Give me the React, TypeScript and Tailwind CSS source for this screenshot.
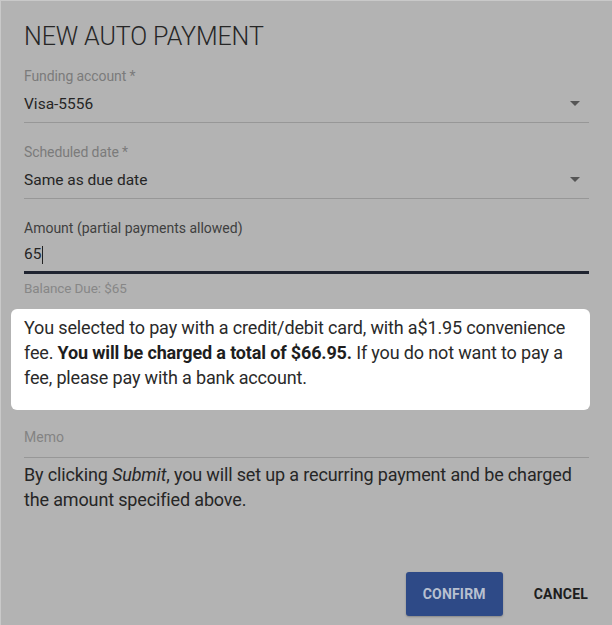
import React from "react";

const font = { fontFamily: "Roboto, 'Liberation Sans', sans-serif" };

function Caret() {
  return (
    <svg width="10" height="6" viewBox="0 0 10 6" className="shrink-0">
      <path d="M0 0 L10 0 L5 5 Z" fill="#555555" />
    </svg>
  );
}

function SelectField({ label, value }: { label: string; value: string }) {
  return (
    <div className="flex flex-col">
      <div className="h-[20px] leading-[20px] text-[14px] text-[#7b7b7b] tracking-[-0.1px]">{label}</div>
      <div className="h-[37px] flex items-center justify-between border-b border-[#979797] pr-[9px]">
        <span className="text-[15.5px] text-[#252525] mt-[1px]">{value}</span>
        <Caret />
      </div>
    </div>
  );
}

export default function App() {
  return (
    <div
      className="w-[612px] h-[625px] bg-[#b3b3b3] border-t border-l border-[#c9c9c9] px-[23px] pt-[20px] flex flex-col"
      style={font}
    >
      <h1 className="text-[25px] leading-[32px] font-light text-[#262626] tracking-[-0.1px]">NEW AUTO PAYMENT</h1>
      <div className="mt-[13px]">
        <SelectField label="Funding account *" value="Visa-5556" />
      </div>
      <div className="mt-[19px]">
        <SelectField label="Scheduled date *" value="Same as due date" />
      </div>
      <div className="mt-[19px] flex flex-col">
        <div className="h-[20px] leading-[20px] text-[14px] text-[#3f3f3f]">Amount (partial payments allowed)</div>
        <div className="h-[36px] flex items-center border-b-[3px] border-[#1f2430]">
          <span className="text-[15.5px] text-[#252525] mt-[1px]">65</span>
          <span className="w-[1px] h-[18px] bg-[#222] ml-[1px] mt-[1px]" />
        </div>
        <div className="mt-[6px] h-[16px] leading-[16px] text-[13.5px] text-[#878787] tracking-[-0.1px]">Balance Due: $65</div>
      </div>
      <div className="mt-[13px] -ml-[13px] -mr-[1px] bg-white rounded-[6px] pl-[13px] pr-[1px] pt-[6px] pb-[21px] h-[101px]">
        <p className="text-[18px] leading-[25px] text-[#2a2a2a] tracking-[-0.15px] whitespace-nowrap">
          You selected to pay with a credit/debit card, with a$1.95 convenience
          <br />
          fee. <strong className="font-bold text-[#1e1e1e]">You will be charged a total of $66.95.</strong> If you do
          not want to pay a
          <br />
          fee, please pay with a bank account.
        </p>
      </div>
      <div className="mt-[17px] h-[31px] border-b border-[#979797]">
        <div className="h-[20px] leading-[20px] text-[14px] text-[#838383]">Memo</div>
      </div>
      <p className="mt-[5px] text-[18px] leading-[24.5px] text-[#262626] tracking-[-0.15px] whitespace-nowrap">
        By clicking <em className="italic">Submit</em>, you will set up a recurring payment and be charged
        <br />
        the amount specified above.
      </p>
      <div className="mt-auto mb-[9px] flex justify-end items-center gap-[31px] pr-[1px]">
        <button className="w-[97px] h-[44px] rounded-[3px] bg-[#2e4a87] text-[#b8c0d0] text-[14px] font-bold tracking-[0.2px] shadow-[0_1px_2px_rgba(0,0,0,0.25)]">
          CONFIRM
        </button>
        <button className="text-[14px] font-bold text-[#1e1e1e] tracking-[0.2px] h-[44px]">CANCEL</button>
      </div>
    </div>
  );
}
